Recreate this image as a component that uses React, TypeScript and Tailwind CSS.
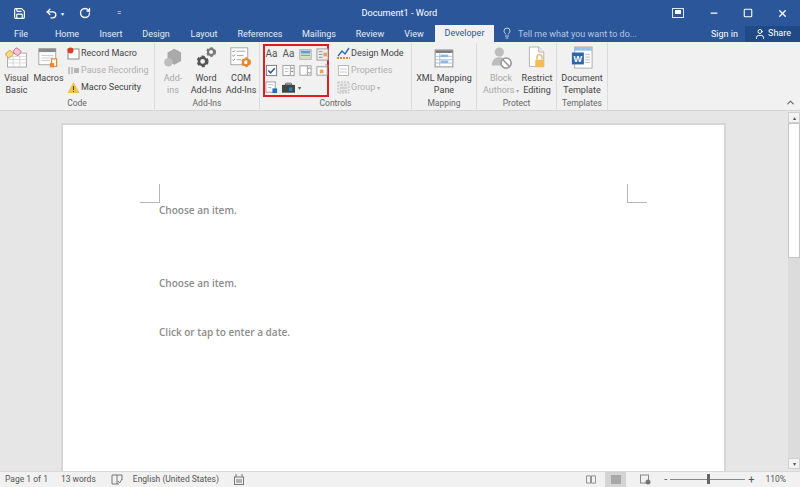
import React from "react";
import { ChevronUp, Lightbulb, Undo2, RotateCw, Save, Minus, X, Square, User } from "lucide-react";

const tabs = [
  { label: "File", w: "w-[42px]" },
  { label: "Home", w: "w-[50px]" },
  { label: "Insert", w: "w-[38px]" },
  { label: "Design", w: "w-[52px]" },
  { label: "Layout", w: "w-[44px]" },
  { label: "References", w: "w-[68px]" },
  { label: "Mailings", w: "w-[50px]" },
  { label: "Review", w: "w-[52px]" },
  { label: "View", w: "w-[36px]" },
];

const Caret = () => <span className="text-[6px] align-middle"> ▾</span>;

const Group = ({ label, w, children }: { label: string; w: string; children: React.ReactNode }) => (
  <div className={`${w} shrink-0 h-[68px] flex flex-col border-r border-[#dcdcdc]`}>
    <div className="flex-1 flex min-h-0">{children}</div>
    <div className="h-[13px] leading-[11px] text-center text-[8.5px] text-[#666]">{label}</div>
  </div>
);

const Big = ({ w, icon, lines, off }: { w: string; icon: React.ReactNode; lines: React.ReactNode[]; off?: boolean }) => (
  <div className={`${w} shrink-0 flex flex-col items-center pt-[3px]`}>
    <div className="h-[24px] flex items-center justify-center">{icon}</div>
    <div className={`mt-[2px] text-center text-[9px] leading-[12px] whitespace-nowrap ${off ? "text-[#a8a8a8]" : "text-[#444]"}`}>
      {lines.map((l, i) => (
        <div key={i}>{l}</div>
      ))}
    </div>
  </div>
);

const Small = ({ icon, label, off }: { icon: React.ReactNode; label: React.ReactNode; off?: boolean }) => (
  <div className={`h-[17px] flex items-center gap-[1px] text-[9px] whitespace-nowrap ${off ? "text-[#b0b0b0]" : "text-[#444]"}`}>
    <span className="w-[13px] h-[13px] flex items-center justify-center">{icon}</span>
    <span>{label}</span>
  </div>
);

const VisualBasicIcon = () => (
  <svg width="23" height="22" viewBox="0 0 28 26">
    <rect x="3" y="7" width="23" height="17" fill="#fff" stroke="#9a9a9a" />
    <path d="M3 11h23M3 15h23M3 19h23M10 11v13M18 11v13" stroke="#cfcfcf" />
    <rect x="1" y="5" width="8" height="7" rx="1.5" fill="#f5d98a" stroke="#c9a23e" transform="rotate(-40 5 8)" />
    <rect x="11" y="2" width="8" height="7" rx="1.5" fill="#f6c6d0" stroke="#d0607a" transform="rotate(35 15 5)" />
  </svg>
);

const MacrosIcon = () => (
  <svg width="22" height="22" viewBox="0 0 26 26">
    <rect x="1" y="2" width="20" height="19" fill="#fff" stroke="#9a9a9a" />
    <rect x="1" y="2" width="20" height="4" fill="#8a8a8a" />
    <path d="M4 10h14M4 13h14M4 16h10" stroke="#c4c4c4" />
    <rect x="16" y="14" width="6" height="9" fill="#fff" stroke="#e8872c" strokeWidth="1.4" />
    <rect x="14" y="19" width="5" height="5" fill="#e8872c" />
  </svg>
);

const Hex = () => (
  <svg width="21" height="22" viewBox="0 0 24 26">
    <path d="M13 2l8 4.5v10L13 21l-8-4.5v-10z" fill="#a9a9a9" />
    <circle cx="6" cy="18" r="5" fill="#bdbdbd" />
  </svg>
);

const Gear = ({ x, y, r, c }: { x: number; y: number; r: number; c: string }) => (
  <g>
    <circle cx={x} cy={y} r={r * 0.72} fill="none" stroke={c} strokeWidth={r * 0.5} />
    <circle cx={x} cy={y} r={r} fill="none" stroke={c} strokeWidth={r * 0.34} strokeDasharray={`${r * 0.6} ${r * 0.5}`} />
  </g>
);

const WordAddIcon = () => (
  <svg width="22" height="22" viewBox="0 0 26 26">
    <Gear x={9} y={17} r={6} c="#555" />
    <Gear x={19} y={6} r={5} c="#777" />
  </svg>
);

const ComIcon = () => (
  <svg width="24" height="22" viewBox="0 0 28 26">
    <rect x="2" y="1" width="20" height="20" fill="#fff" stroke="#9a9a9a" />
    <path d="M4 5l1 1 2-2M4 10l1 1 2-2M4 15l1 1 2-2" stroke="#666" fill="none" />
    <path d="M9 5h10M9 10h8M9 15h5" stroke="#999" />
    <Gear x={20} y={18} r={5} c="#e8872c" />
  </svg>
);

const Ctl = ({ children }: { children: React.ReactNode }) => (
  <svg width="13" height="13" viewBox="0 0 14 14">{children}</svg>
);

const Aa = () => <span className="text-[10px] leading-[14px] text-[#555]">Aa</span>;

const controls = [
  <Aa key="a" />,
  <Aa key="b" />,
  <Ctl key="c">
    <rect x="1" y="2" width="12" height="10" fill="#fff" stroke="#9a9a9a" />
    <rect x="2" y="3" width="10" height="3" fill="#5a9bd0" />
    <rect x="2" y="7" width="10" height="2" fill="#7db86a" />
    <rect x="2" y="10" width="10" height="1" fill="#d8c48c" />
  </Ctl>,
  <Ctl key="d">
    <rect x="1" y="1" width="12" height="12" fill="#eee" stroke="#9a9a9a" />
    <path d="M3 4h4M3 7h4M3 10h4" stroke="#888" />
    <rect x="8" y="5" width="4" height="4" fill="#e8a05c" />
  </Ctl>,
  <Ctl key="e">
    <rect x="1.5" y="1.5" width="11" height="11" fill="#fff" stroke="#777" />
    <path d="M3.5 7l2.5 2.5 4.5-5" stroke="#1f5ea8" strokeWidth="1.6" fill="none" />
  </Ctl>,
  <Ctl key="f">
    <rect x="1" y="1.5" width="12" height="11" fill="#fff" stroke="#999" />
    <path d="M9 2v10" stroke="#999" />
    <path d="M3 5h4M3 8h4" stroke="#bbb" />
    <path d="M10 4.5h2M10 8h2" stroke="#666" />
  </Ctl>,
  <Ctl key="g">
    <rect x="1" y="2" width="12" height="10" fill="#fff" stroke="#999" />
    <path d="M9 2v10" stroke="#999" />
    <path d="M10 5l1-1 1 1M10 9l1 1 1-1" stroke="#666" fill="none" />
  </Ctl>,
  <Ctl key="h">
    <rect x="1" y="3" width="11" height="9" fill="#fff" stroke="#999" />
    <rect x="4" y="6" width="4" height="4" fill="#e8a05c" />
    <path d="M10 1h3v3" stroke="#888" fill="none" />
  </Ctl>,
  <Ctl key="i">
    <rect x="1" y="1" width="10" height="11" fill="#fff" stroke="#999" />
    <path d="M3 4h6M3 7h4" stroke="#bbb" />
    <rect x="8" y="8" width="5" height="5" fill="#1f6fc0" />
  </Ctl>,
];

const BlockIcon = () => (
  <svg width="22" height="24" viewBox="0 0 26 28">
    <circle cx="11" cy="7" r="5.5" fill="#bdbdbd" />
    <path d="M2 23c0-7 4-10 9-10s9 3 9 10z" fill="#bdbdbd" />
    <circle cx="19" cy="20" r="6" fill="#fff" stroke="#9a9a9a" strokeWidth="2" />
    <path d="M15 16l8 8" stroke="#9a9a9a" strokeWidth="2" />
  </svg>
);

const RestrictIcon = () => (
  <svg width="22" height="24" viewBox="0 0 26 28">
    <path d="M4 1h11l6 6v17H4z" fill="#fff" stroke="#aaa" />
    <path d="M15 1v6h6" fill="#eee" stroke="#aaa" />
    <path d="M13 16v-3a3 3 0 016 0v3" fill="none" stroke="#e8b858" strokeWidth="1.6" />
    <rect x="11" y="16" width="10" height="9" rx="1" fill="#f0bd55" />
  </svg>
);

const TemplateIcon = () => (
  <svg width="22" height="24" viewBox="0 0 24 26">
    <rect x="4" y="1" width="19" height="23" fill="#fff" stroke="#a8a8a8" />
    <rect x="4" y="1" width="19" height="4" fill="#9cc0e6" />
    <path d="M15 9h6M15 12h6M15 15h6M15 18h6" stroke="#bbb" />
    <rect x="1" y="7" width="13" height="13" fill="#2b63ad" />
    <text x="7.5" y="17" textAnchor="middle" fontSize="10" fontWeight="700" fill="#fff" fontFamily="Liberation Sans, sans-serif">W</text>
  </svg>
);

const XmlIcon = () => (
  <svg width="22" height="22" viewBox="0 0 24 26">
    <rect x="1.5" y="3.5" width="21" height="20" fill="#fff" stroke="#7f7f7f" />
    <rect x="2" y="4" width="20" height="3" fill="#777" />
    <path d="M2 11h20M2 15h20M2 19h20M7 7v16" stroke="#9fb9d4" />
    <rect x="8" y="9" width="9" height="3" fill="#8fb7dc" />
    <rect x="8" y="16" width="9" height="3" fill="#8fb7dc" />
  </svg>
);

export default function App() {
  return (
    <div className="w-[800px] h-[487px] overflow-hidden flex flex-col bg-[#e6e6e6] font-['Roboto',sans-serif]">
      {/* title bar */}
      <div className="h-[26px] shrink-0 bg-[#2b579a] text-white flex items-center">
        <Save className="ml-[13px] w-[13px] h-[13px]" strokeWidth={2.2} />
        <Undo2 className="ml-[19px] w-[13px] h-[13px]" strokeWidth={2.4} />
        <span className="ml-[3px] text-[6px]">▾</span>
        <RotateCw className="ml-[15px] w-[12px] h-[12px]" strokeWidth={2.6} />
        <span className="ml-[26px] text-[8px] leading-none">=</span>
        <div className="flex-1 pl-[240px] text-[9.2px]">Document1 - Word</div>
        <svg width="12" height="10" viewBox="0 0 12 10" className="mr-[25px]">
          <rect x="0.5" y="0.5" width="11" height="9" fill="none" stroke="#dfe8f5" />
          <rect x="3" y="2" width="6" height="4" fill="#fff" />
        </svg>
        <Minus className="w-[10px] h-[10px] mr-[24px]" strokeWidth={3} />
        <Square className="w-[10px] h-[10px] mr-[24px]" strokeWidth={2.6} />
        <X className="w-[11px] h-[11px] mr-[12px]" strokeWidth={3} />
      </div>

      {/* tab row */}
      <div className="h-[16px] shrink-0 bg-[#2b579a] flex items-stretch text-[9px] text-[#e6edf7]">
        {tabs.map((t) => (
          <div key={t.label} className={`${t.w} shrink-0 text-center leading-[16px]`}>
            {t.label}
          </div>
        ))}
        <div className="w-[59px] ml-[3px] mt-[-1px] h-[18px] bg-[#f1f1f1] text-[#2b579a] text-center leading-[17px] z-10">Developer</div>
        <Lightbulb className="ml-[7px] mt-[1px] w-[12px] h-[12px] text-[#c5d4ea]" />
        <span className="ml-[5px] w-[193px] leading-[16px] text-[#b3c6e3]">Tell me what you want to do...</span>
        <span className="w-[34px] leading-[16px] text-white">Sign in</span>
        <div className="flex-1 bg-[#204a85] flex items-center justify-center gap-[2px] text-white">
          <User className="w-[12px] h-[12px]" />
          Share
        </div>
      </div>

      {/* ribbon */}
      <div className="h-[69px] shrink-0 bg-[#f1f1f1] border-b border-[#d4d4d4] flex pt-[1px] relative">
        <Group label="Code" w="w-[155px]">
          <Big w="w-[33px]" icon={<VisualBasicIcon />} lines={["Visual", "Basic"]} />
          <Big w="w-[31px]" icon={<MacrosIcon />} lines={["Macros"]} />
          <div className="ml-[3px] flex flex-col pt-[2px]">
            <Small
              label="Record Macro"
              icon={
                <svg width="13" height="13" viewBox="0 0 13 13">
                  <rect x="1" y="2" width="11" height="10" fill="#fff" stroke="#888" />
                  <circle cx="3.5" cy="3.5" r="3" fill="#d8402a" />
                </svg>
              }
            />
            <Small
              off
              label="Pause Recording"
              icon={
                <svg width="13" height="13" viewBox="0 0 13 13">
                  <path d="M2 3v7M5 3v7" stroke="#b5b5b5" strokeWidth="1.5" />
                  <rect x="7" y="4" width="5" height="5" fill="#b5b5b5" />
                </svg>
              }
            />
            <Small
              label="Macro Security"
              icon={
                <svg width="13" height="13" viewBox="0 0 13 13">
                  <path d="M6.5 1l6 11h-12z" fill="#f2c14e" />
                  <path d="M6.5 5v4M6.5 10v1" stroke="#444" />
                </svg>
              }
            />
          </div>
        </Group>
        <Group label="Add-Ins" w="w-[105px]">
          <Big w="w-[34px] ml-[1px]" off icon={<Hex />} lines={["Add-", "ins"]} />
          <Big w="w-[32px]" icon={<WordAddIcon />} lines={["Word", "Add-Ins"]} />
          <Big w="w-[34px] ml-[2px]" icon={<ComIcon />} lines={["COM", "Add-Ins"]} />
        </Group>
        <Group label="Controls" w="w-[152px]">
          <div className="ml-[3px] mt-[1px] w-[66px] h-[53px] border-2 border-[#e01b24]">
            <div className="-ml-[2px] grid grid-cols-[repeat(4,17px)] auto-rows-[16.5px] justify-items-center items-center">
              {controls.map((c, i) => (
                <div key={i} className="w-[16px] flex items-center justify-center">{c}</div>
              ))}
              <div className="col-span-3 justify-self-start pl-[2px] flex items-center gap-[3px]">
                <svg width="13" height="11" viewBox="0 0 15 12">
                  <path d="M5 1h5a1 1 0 011 1v1H4V2a1 1 0 011-1z" fill="none" stroke="#444" />
                  <rect x="0" y="3" width="15" height="9" fill="#444" />
                  <rect x="8" y="6" width="4" height="4" fill="#2f7fc6" />
                </svg>
                <span className="text-[6px] text-[#555]">▾</span>
              </div>
            </div>
          </div>
          <div className="ml-[8px] flex flex-col pt-[2px]">
            <Small
              label="Design Mode"
              icon={
                <svg width="13" height="13" viewBox="0 0 13 13">
                  <path d="M1 9l4-5 3 3 4-6" stroke="#2b6cb0" strokeWidth="1.4" fill="none" />
                  <path d="M0 11h13" stroke="#e8872c" strokeWidth="2" strokeDasharray="2 1" />
                </svg>
              }
            />
            <Small
              off
              label="Properties"
              icon={
                <svg width="13" height="13" viewBox="0 0 13 13">
                  <rect x="1.5" y="1.5" width="10" height="10" fill="#fff" stroke="#bbb" />
                  <path d="M3 5h7M3 8h7" stroke="#ccc" />
                </svg>
              }
            />
            <Small
              off
              label={<>Group<Caret /></>}
              icon={
                <svg width="13" height="13" viewBox="0 0 13 13">
                  <rect x="1" y="1" width="11" height="11" fill="#e8e8e8" stroke="#bbb" strokeDasharray="2 1" />
                  <path d="M3 4h3M7 4h3M3 7h7M3 10h7" stroke="#bbb" />
                </svg>
              }
            />
          </div>
        </Group>
        <Group label="Mapping" w="w-[65px]">
          <Big w="w-full" icon={<XmlIcon />} lines={["XML Mapping", "Pane"]} />
        </Group>
        <Group label="Protect" w="w-[80px]">
          <Big w="w-[48px]" off icon={<BlockIcon />} lines={["Block", <>Authors<Caret /></>]} />
          <Big w="w-[24px]" icon={<RestrictIcon />} lines={["Restrict", "Editing"]} />
        </Group>
        <Group label="Templates" w="w-[51px]">
          <Big w="w-full" icon={<TemplateIcon />} lines={["Document", "Template"]} />
        </Group>
        <ChevronUp className="absolute right-[4px] bottom-[2px] w-[11px] h-[11px] text-[#666]" strokeWidth={2.5} />
      </div>

      {/* document area */}
      <div className="flex-1 min-h-0 flex overflow-hidden">
        <div className="flex-1 pl-[61px] pt-[12px]">
          <div className="w-[665px] h-[400px] bg-white border-l-2 border-t-2 border-r-2 border-[#d6d6d6] relative pl-[96px] pt-[78px] font-['Open_Sans',sans-serif] text-[10px] font-semibold text-[#8c8c8c]">
            <div className="absolute left-[77px] top-[59px] w-[20px] h-[19px] border-r border-b border-[#b5b5b5]" />
            <div className="absolute left-[564px] top-[59px] w-[20px] h-[19px] border-l border-b border-[#b5b5b5]" />
            <div className="h-[14px] leading-[14px]">Choose an item.</div>
            <div className="h-[14px] leading-[14px] mt-[59px]">Choose an item.</div>
            <div className="h-[14px] leading-[14px] mt-[35px]">Click or tap to enter a date.</div>
          </div>
        </div>
        {/* scrollbar */}
        <div className="w-[12px] shrink-0 pt-[1px] pb-[2px] flex flex-col">
          <div className="h-[11px] bg-[#f4f4f4] border border-[#d0d0d0] flex items-center justify-center text-[6px] leading-none text-[#555]">▴</div>
          <div className="h-[135px] bg-white border border-[#c4c4c4]" />
          <div className="flex-1 bg-[#dcdcdc]" />
          <div className="h-[11px] bg-[#f4f4f4] border border-[#d0d0d0] flex items-center justify-center text-[6px] leading-none text-[#555]">▾</div>
        </div>
      </div>

      {/* status bar */}
      <div className="h-[16px] shrink-0 bg-[#f1f1f1] border-t border-[#d8d8d8] flex items-center text-[8.5px] text-[#555]">
        <span className="ml-[5px]">Page 1 of 1</span>
        <span className="ml-[13px]">13 words</span>
        <svg width="12" height="11" viewBox="0 0 12 11" className="ml-[15px]">
          <path d="M1 1h5v9H1zM6 1h5v5M6 10h2" fill="none" stroke="#777" />
          <path d="M7 7l1.5 2L11 5" fill="none" stroke="#777" />
        </svg>
        <span className="ml-[10px]">English (United States)</span>
        <svg width="10" height="11" viewBox="0 0 10 11" className="ml-[15px]">
          <rect x="0.5" y="3" width="9" height="7.5" fill="none" stroke="#777" />
          <path d="M2 0v3M8 0v3M2 6h6M2 8h6" stroke="#777" />
        </svg>
        <div className="flex-1" />
        <svg width="10" height="11" viewBox="0 0 11 11" className="mr-[9px]">
          <path d="M0.5 1.5h4.5v8h-4.5zM6 1.5h4.5v8H6z" fill="none" stroke="#888" />
        </svg>
        <div className="w-[21px] h-[15px] bg-[#d4d4d4] flex items-center justify-center mr-[14px]">
          <div className="w-[10px] h-[9px] bg-[#a8a8a8]" />
        </div>
        <svg width="11" height="11" viewBox="0 0 11 11" className="mr-[13px]">
          <rect x="0.5" y="1" width="8" height="8" fill="none" stroke="#888" />
          <circle cx="8" cy="8" r="2.5" fill="#777" />
        </svg>
        <span className="text-[11px] leading-none mr-[3px]">-</span>
        <div className="w-[75px] h-px bg-[#888] relative">
          <div className="absolute left-[37px] top-[-5px] w-[3px] h-[10px] bg-[#666]" />
        </div>
        <span className="text-[11px] leading-none ml-[3px]">+</span>
        <span className="ml-[11px] mr-[14px]">110%</span>
      </div>
    </div>
  );
}
